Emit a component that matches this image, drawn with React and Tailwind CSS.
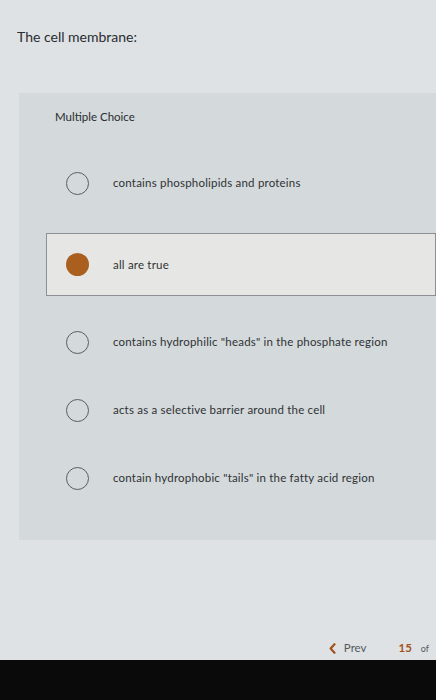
const choices = [
  { text: 'contains phospholipids and proteins' },
  { text: 'all are true', selected: true },
  { text: 'contains hydrophilic "heads" in the phosphate region' },
  { text: 'acts as a selective barrier around the cell' },
  { text: 'contain hydrophobic "tails" in the fatty acid region' },
];

function Radio({ selected }) {
  if (selected) {
    return <span className="block h-[23px] w-[23px] shrink-0 rounded-full bg-[#ab5f1f]" />;
  }
  return <span className="block h-[23px] w-[23px] shrink-0 rounded-full border-[1.5px] border-[#5a5e62]" />;
}

export default function App() {
  return (
    <div className="flex h-[700px] w-[436px] flex-col overflow-hidden bg-[#dee2e5] font-['Lato',sans-serif] text-[#2a2d30]">
      <h1 className="pl-[17px] pt-[28px] text-[14px] leading-[18px]">The cell membrane:</h1>

      <div className="ml-[19px] mt-[47px] h-[447px] bg-[#d4d9dc] pt-[17px]">
        <p className="pl-[36px] text-[11.5px] leading-[14px]">Multiple Choice</p>

        <ul className="mt-[25px] flex flex-col">
          {choices.map((choice) => (
            <li
              key={choice.text}
              className={
                choice.selected
                  ? 'mb-[12px] ml-[27px] mt-[16px] flex h-[63px] items-center border border-[#8c9094] bg-[#e6e7e4] pl-[19px]'
                  : 'ml-[27px] flex h-[68px] items-center pl-[20px]'
              }
            >
              <Radio selected={choice.selected} />
              <span className="ml-[24px] text-[11.5px] tracking-[0.2px] text-[#2f3234]">{choice.text}</span>
            </li>
          ))}
        </ul>
      </div>

      <div className="mt-auto flex h-[24px] items-center justify-end pr-[7px] text-[11.5px]">
        <span className="flex items-center gap-[8px] text-[#55595d]">
          <svg width="7" height="11" viewBox="0 0 7 11" fill="none">
            <path d="M5.5 1.2 1.6 5.5l3.9 4.3" stroke="#a3521c" strokeWidth="2.2" strokeLinecap="round" strokeLinejoin="round" />
          </svg>
          Prev
        </span>
        <span className="ml-[32px] flex items-baseline gap-[9px]">
          <span className="font-bold text-[#a3521c]">15</span>
          <span className="text-[9px] text-[#55595d]">of</span>
        </span>
      </div>
      <div className="h-[40px] bg-[#0b0a0a]" />
    </div>
  );
}
